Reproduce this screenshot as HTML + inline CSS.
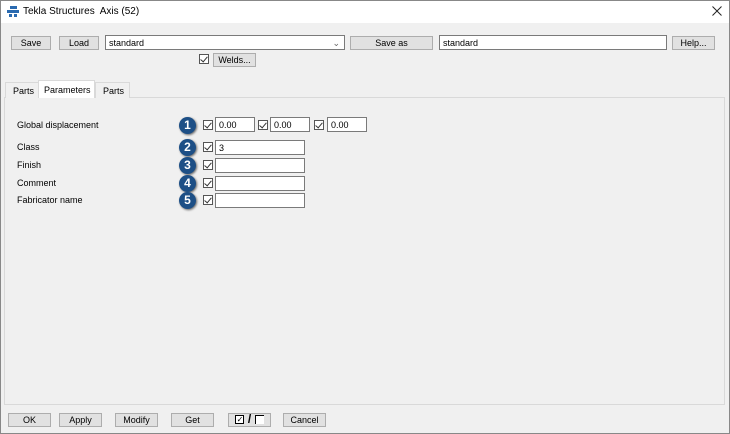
<!DOCTYPE html>
<html><head><style>
*{box-sizing:border-box}
body{margin:0;width:730px;height:434px;overflow:hidden;background:#f0f0f0;font-family:"Liberation Sans",Arial,sans-serif;font-size:9px;color:#000;position:relative}
.a{position:absolute}
.win{position:absolute;left:0;top:0;width:730px;height:434px;border:1px solid #888}
.title{left:1px;top:1px;width:728px;height:22px;background:#fff}
.btn{position:absolute;background:#e1e1e1;border:1px solid #adadad;text-align:center;line-height:12px;height:14px}
.inp{position:absolute;background:#fff;border:1px solid #7a7a7a;height:15px;padding-left:3px;line-height:14px}
.cb{position:absolute;width:10px;height:10px;border:1px solid #555;background:#fff}
.cb:after{content:"";position:absolute;left:2px;top:0px;width:3px;height:6px;border:solid #333;border-width:0 1px 1px 0;transform:rotate(40deg)}
.num{position:absolute;width:17px;height:17px;border-radius:50%;background:#1d4f86;color:#fff;font-weight:bold;font-size:12px;text-align:center;line-height:17px;box-shadow:1px 1px 2px #666}
.lbl{position:absolute;left:17px}
</style></head><body>
<div class="win"></div>
<div class="a title"></div>
<svg class="a" style="left:7px;top:6px" width="12" height="11"><rect x="3" y="0" width="7" height="3" fill="#2a6ab0"/><rect x="0" y="4" width="12" height="3" fill="#2a6ab0"/><rect x="2" y="8" width="3" height="3" fill="#2a6ab0"/><rect x="7" y="8" width="3" height="3" fill="#2a6ab0"/></svg>
<div class="a" style="left:23px;top:6px;font-size:10px">Tekla Structures&nbsp; Axis (52)</div>
<svg class="a" style="left:712px;top:6px" width="10" height="10"><path d="M0.5 0.5L9.5 9.5M9.5 0.5L0.5 9.5" stroke="#222" stroke-width="1"/></svg>

<div class="btn" style="left:11px;top:36px;width:40px">Save</div>
<div class="btn" style="left:59px;top:36px;width:40px">Load</div>
<div class="inp" style="left:105px;top:35px;width:240px">standard<span style="position:absolute;right:4px;top:0;color:#666">⌄</span></div>
<div class="btn" style="left:350px;top:36px;width:83px">Save as</div>
<div class="inp" style="left:439px;top:35px;width:228px">standard</div>
<div class="btn" style="left:672px;top:36px;width:43px">Help...</div>
<div class="cb" style="left:199px;top:54px"></div>
<div class="btn" style="left:213px;top:53px;width:43px">Welds...</div>

<div class="a" style="left:4px;top:97px;width:721px;height:308px;border:1px solid #d9d9d9;background:#f0f0f0"></div>
<div class="a" style="left:5px;top:82px;width:34px;height:16px;border:1px solid #d9d9d9;border-bottom:none;background:#f0f0f0;padding:3px 0 0 7px">Parts</div>
<div class="a" style="left:38px;top:80px;width:57px;height:18px;border:1px solid #d9d9d9;border-bottom:none;background:#fff;padding:4px 0 0 5px">Parameters</div>
<div class="a" style="left:95px;top:82px;width:35px;height:16px;border:1px solid #d9d9d9;border-bottom:none;background:#f0f0f0;padding:3px 0 0 7px">Parts</div>

<div class="lbl" style="top:120px">Global displacement</div>
<div class="lbl" style="top:142px">Class</div>
<div class="lbl" style="top:160px">Finish</div>
<div class="lbl" style="top:178px">Comment</div>
<div class="lbl" style="top:195px">Fabricator name</div>

<div class="num" style="left:179px;top:117px">1</div>
<div class="cb" style="left:203px;top:120px"></div>
<div class="inp" style="left:215px;top:117px;width:40px">0.00</div>
<div class="cb" style="left:258px;top:120px"></div>
<div class="inp" style="left:270px;top:117px;width:40px">0.00</div>
<div class="cb" style="left:314px;top:120px"></div>
<div class="inp" style="left:327px;top:117px;width:40px">0.00</div>

<div class="num" style="left:179px;top:139px">2</div>
<div class="cb" style="left:203px;top:142px"></div>
<div class="inp" style="left:215px;top:140px;width:90px">3</div>
<div class="num" style="left:179px;top:157px">3</div>
<div class="cb" style="left:203px;top:160px"></div>
<div class="inp" style="left:215px;top:158px;width:90px"></div>
<div class="num" style="left:179px;top:175px">4</div>
<div class="cb" style="left:203px;top:178px"></div>
<div class="inp" style="left:215px;top:176px;width:90px"></div>
<div class="num" style="left:179px;top:192px">5</div>
<div class="cb" style="left:203px;top:195px"></div>
<div class="inp" style="left:215px;top:193px;width:90px"></div>

<div class="btn" style="left:8px;top:413px;width:43px">OK</div>
<div class="btn" style="left:59px;top:413px;width:43px">Apply</div>
<div class="btn" style="left:115px;top:413px;width:43px">Modify</div>
<div class="btn" style="left:171px;top:413px;width:43px">Get</div>
<div class="btn" style="left:228px;top:413px;width:43px;font-size:12px;line-height:11px"><span style="display:inline-block;width:9px;height:9px;border:1px solid #000;vertical-align:middle;font-size:8px;line-height:7px;background:#fff">✓</span> <b>/</b> <span style="display:inline-block;width:9px;height:9px;border-left:1px solid #000;border-top:1px solid #000;vertical-align:middle;background:#fff"></span></div>
<div class="btn" style="left:283px;top:413px;width:43px">Cancel</div>
</body></html>
